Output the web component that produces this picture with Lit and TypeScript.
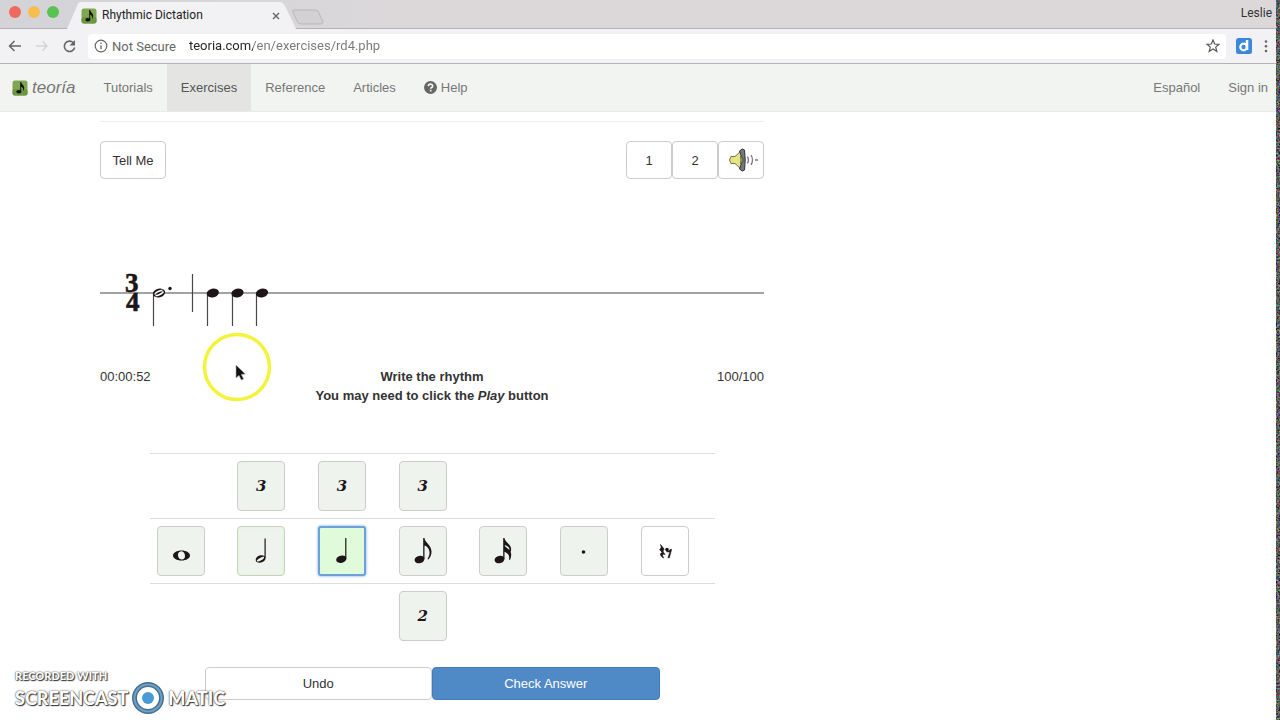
import { LitElement, html, svg, css } from "lit";
import { customElement, state } from "lit/decorators.js";

const glyphs: Record<string, unknown> = {
  whole: svg`<path fill-rule="evenodd" d="M24.500 24.500c4.900 0 8.500 2.200 8.500 5S29.400 34.500 24.500 34.500s-8.500-2.200-8.500-5 3.600-5 8.500-5zm-.9.900c-2.100.3-3 2-2.600 4.400.4 2.400 2 4 4.300 3.700 2.200-.3 3-2.100 2.600-4.500-.4-2.400-2.100-3.900-4.300-3.600z"/>`,
  half: svg`<path fill-rule="evenodd" d="M27.500 12.500h1.200v19c0 3-2.800 5.200-6 5.200-2.500 0-4-1-4-2.800 0-2.500 2.900-4.600 5.900-4.600 1.200 0 2.200.3 2.900.9zM27 30.800c-.7-.9-6.600 2.100-7.100 3.800-.2 1.500 1.800 1.100 3.900 0 2-1 3.800-2.600 3.200-3.800z"/>`,
  quarter: svg`<ellipse cx="23.300" cy="33.200" rx="5.200" ry="3.600" transform="rotate(-14 23.300 33.200)"/><path d="M27.200 12h1.200v20.500h-1.200z"/>`,
  eighth: svg`<ellipse cx="20.500" cy="33.500" rx="5" ry="3.700" transform="rotate(-14 20.500 33.500)"/>
    <path d="M24.200 12h1.300c.3 4.600 6.800 7 7 13.500.1 3.100-1 5.700-3.200 8l-.8-.6c1.700-2.500 2.200-4.700 2-6.800-.3-3.600-2.500-5.800-5-6.500V33h-1.300z"/>`,
  sixteenth: svg`<ellipse cx="20.500" cy="33.500" rx="5" ry="3.700" transform="rotate(-14 20.500 33.500)"/>
    <path fill-rule="evenodd" d="M24.200 12h1.300c.3 3.900 6 6 6.600 10.500.1 1.400 0 2.400-.5 3.400 1 2 .8 5-.6 8l-1-.3c.7-3.700-.3-6.200-4.500-7.900V33h-1.300zM25.600 19c.3 2.300 2.900 3 4.900 5 .2-2.500-1.900-4.200-4.900-5z"/>`,
  dot: svg`<circle cx="23.500" cy="26" r="1.800"/>`,
  rest: svg`<path stroke="#1d1518" stroke-width=".7" d="M19.500 18.500l3.600 4.600c-1.500 1.700-1.300 2.800.9 5.300-2-.6-2.900-.1-2.300 1.400.2.700.5 1.600.9 2.200-2.400-1.300-4.100-3.500-2.500-4.900.4-.4.900-.5 1.500-.4l-3-3c1.800-1.600 1.900-2.800.9-5.200z"/>
    <circle cx="26" cy="23.500" r="1.800"/><path stroke="#1d1518" stroke-width=".5" d="M25 24.800c2.200.8 3.300 0 4.700-1.700l1 .3-2.400 8.600-1.400-.3 2-6c-1.500.7-2.500.5-3.900-.9z"/>`,
};

type Cell = { label: string; glyph?: string; text?: string; tone?: string } | null;

const rows: Cell[][] = [
  [null, { label: "Half note triplet", text: "3" }, { label: "Quarter note triplet", text: "3" }, { label: "Eighth note triplet", text: "3" }],
  [
    { label: "Whole note", glyph: "whole" },
    { label: "Half note", glyph: "half", tone: "tinted" },
    { label: "Quarter note", glyph: "quarter" },
    { label: "Eighth note", glyph: "eighth" },
    { label: "Sixteenth note", glyph: "sixteenth" },
    { label: "Dot", glyph: "dot" },
    { label: "Rests", glyph: "rest", tone: "plain" },
  ],
  [null, null, null, { label: "Duplet", text: "2" }],
];

const favicon = html`<svg class="favicon" viewBox="0 0 16 16" aria-hidden="true">
  <rect x=".5" y=".5" width="15" height="15" rx="2.500" fill="#7fa650"/>
  <rect x=".5" y="9" width="15" height="6.500" rx="2.500" fill="#6d9640"/>
  <ellipse cx="6.800" cy="11.800" rx="2.500" ry="1.800" fill="#111"/>
  <path d="M8.200 2h1c.3 2.200 3 3.200 3 6 0 1.200-.4 2.100-1 3 .2-2.400-.5-3.700-2-4.300v5.100h-1z" fill="#111"/></svg>`;

@customElement("browser-bar")
export class BrowserBar extends LitElement {
  static styles = css`
    :host { display: block; font-family: Roboto, "Liberation Sans", sans-serif; }
    button { border: 0; padding: 0; background: none; display: grid; place-items: center; }
    svg { display: block; }
    .tabs { height: 28px; display: flex; background: linear-gradient(90deg, #d3d3d8, #dcd8da 35%, #dcd8da); border-bottom: 1px solid #b5b2b5; }
    .lights { display: flex; gap: 7px; padding: 6px 0 0 9px; width: 57px; }
    .light { width: 12px; height: 12px; border-radius: 50%; }
    .red { background: #ee6a5f; }
    .amber { background: #f5be4f; }
    .green { background: #58c353; }
    .tab { position: relative; width: 231px; height: 29px; display: flex; align-items: center; color: #222; font-size: 12px; padding: 2px 0 0 15px; box-sizing: border-box; }
    .shape { position: absolute; inset: 0; width: 100%; height: 100%; }
    .tab > :not(.shape) { position: relative; }
    .favicon { width: 16px; height: 16px; margin-right: 5px; }
    .title { flex: 1; }
    .close { margin-right: 16px; width: 10px; height: 10px; }
    .add { margin: 8px 0 0 -7px; height: 18px; }
    .user { margin-left: auto; padding: 6px 4px 0 0; font-size: 12px; line-height: 14px; color: #333; }
    .toolbar { height: 34px; display: flex; align-items: center; gap: 10px; background: #f2f1f3; border-bottom: 1px solid #b4b4b6; padding: 0 4px 0 7px; }
    .nav { width: 17px; height: 17px; }
    .address { flex: 1; height: 25px; display: flex; align-items: center; gap: 4px; padding: 0 6px; background: #fff; border-radius: 4px; font-size: 13px; color: #666; }
    .secure { margin-right: 9px; }
    .url { flex: 1; min-width: 0; padding: 0; border: 0; outline: 0; font: inherit; line-height: 20px; color: transparent; background: linear-gradient(90deg, #222 64px, #777 64px); -webkit-background-clip: text; background-clip: text; }
    .menu { width: 10px; height: 17px; }
  `;

  render() {
    return html`
      <div class="tabs">
        <div class="lights"><span class="light red"></span><span class="light amber"></span><span class="light green"></span></div>
        <div class="tab">
          <svg class="shape" viewBox="0 0 231 29" preserveAspectRatio="none" aria-hidden="true"><path d="M1 29L11 6Q12 2 15 2H214Q217 2 219 6L230 29Z" fill="#f2f1f3"/></svg>
          ${favicon}<span class="title">Rhythmic Dictation</span>
          <button class="close" aria-label="Close tab"><svg width="10" height="10"><path d="M2 2l6 6M8 2l-6 6" stroke="#666" stroke-width="1.400"/></svg></button>
        </div>
        <button class="add" aria-label="New tab"><svg width="34" height="18"><path d="M3 2h22q3 0 4 3l4 9q0 2-2 2H11q-3 0-4-3L3 4z" fill="#d3d1d3" stroke="#b9b7b9"/></svg></button>
        <span class="user">Leslie</span>
      </div>
      <div class="toolbar">
        <button class="nav" aria-label="Back"><svg width="17" height="17"><path d="M14 8H3M7.500 3L2.500 8 7.500 13" fill="none" stroke="#666" stroke-width="1.500"/></svg></button>
        <button class="nav" aria-label="Forward"><svg width="17" height="17"><path d="M2 8h11M8.500 3.500L13 8 8.500 12.500" fill="none" stroke="#d4d4d6" stroke-width="1.500"/></svg></button>
        <button class="nav" aria-label="Reload"><svg width="17" height="17"><path d="M12.300 4.700A5.200 5.200 0 1 0 13.600 9.500" fill="none" stroke="#666" stroke-width="1.600"/><path d="M14 2v5.500H8.500z" fill="#666"/></svg></button>
        <div class="address">
          <svg width="14" height="14" aria-hidden="true"><circle cx="7" cy="7" r="5.800" fill="none" stroke="#666" stroke-width="1.200"/><path d="M7 6.200v4M7 3.600v1.400" stroke="#666" stroke-width="1.300"/></svg>
          <span class="secure">Not Secure</span>
          <input class="url" type="text" aria-label="Address" .value=${"teoria.com/en/exercises/rd4.php"}>
          <button aria-label="Bookmark"><svg width="14" height="14"><path d="M7 1l1.700 4 4.300.3-3.300 2.800 1.100 4.300L7 10l-3.800 2.400 1.100-4.300L1 5.300 5.300 5z" fill="none" stroke="#555" stroke-width="1.200"/></svg></button>
        </div>
        <svg width="16" height="16" aria-hidden="true"><rect width="16" height="16" rx="2.500" fill="#3b87dc"/><circle cx="7.600" cy="9" r="3.300" fill="none" stroke="#fff" stroke-width="2.200"/><path d="M9.800 2h2.500v10H9.800z" fill="#fff"/></svg>
        <button class="menu" aria-label="Menu"><svg width="10" height="17"><g fill="#666"><circle cx="4" cy="3.500" r="1.300"/><circle cx="4" cy="8.300" r="1.300"/><circle cx="4" cy="13" r="1.300"/></g></svg></button>
      </div>`;
  }
}

@customElement("site-nav")
export class SiteNav extends LitElement {
  static styles = css`
    :host { display: block; }
    nav { display: flex; height: 47px; background: #f2f4f1; border-bottom: 1px solid #e9ebe8; }
    a { display: flex; align-items: center; gap: 4px; padding: 0 14px; color: #777; text-decoration: none; font-size: 13px; }
    .brand { padding-left: 12px; font-size: 17px; font-style: italic; }
    .active { background: #e4e5e3; color: #555; }
    .push { margin-left: auto; }
    .end { padding-right: 8px; }
    .favicon { width: 16px; height: 16px; }
  `;

  render() {
    return html`<nav>
      <a class="brand" href="#">${favicon}teoría</a>
      <a href="#">Tutorials</a>
      <a class="active" href="#">Exercises</a>
      <a href="#">Reference</a>
      <a href="#">Articles</a>
      <a href="#"><svg width="13" height="13" aria-hidden="true"><circle cx="6.500" cy="6.500" r="6.500" fill="#666"/><path d="M4.300 5.100q.2-2 2.200-2t2.200 1.800q0 1.100-1.100 1.600-.9.500-.9 1.300M6.700 8.800v1.600" fill="none" stroke="#f2f4f1" stroke-width="1.600"/></svg>Help</a>
      <a class="push" href="#">Español</a>
      <a class="end" href="#">Sign in</a>
    </nav>`;
  }
}

@customElement("rhythm-palette")
export class RhythmPalette extends LitElement {
  @state() private selected = "Quarter note";

  static styles = css`
    :host { display: block; }
    .row { display: grid; grid-template-columns: repeat(7, 1fr); height: 64px; align-items: center; border-top: 1px solid #ddd; }
    .cell { padding-left: 7px; }
    button { display: grid; place-items: center; width: 48px; height: 50px; padding: 0; border: 1px solid #ccc; border-radius: 4px; background: #eff3ee; color: #1d1518; font: italic bold 15px/20px "DejaVu Serif", serif; }
    .tinted { background: linear-gradient(#eff3ee, #eff3ee) center / 42px 44px no-repeat #e5f8df; }
    .plain { background: #fff; }
    .selected { background: #e0fbd9; border: 2px solid #6f9fd8; border-radius: 3px; box-shadow: 0 0 3px #6fa5e8; }
    svg { display: block; fill: #1d1518; }
  `;

  render() {
    return rows.map(
      (row) => html`<div class="row">
        ${row.map(
          (c) => html`<div class="cell">
            ${c
              ? html`<button
                  class=${c.label === this.selected ? "selected" : c.tone ?? ""}
                  aria-label=${c.label}
                  @click=${() => (this.selected = c.label)}
                >${c.glyph ? html`<svg width="44" height="46" viewBox="2 2 44 46">${glyphs[c.glyph]}</svg>` : c.text}</button>`
              : ""}
          </div>`
        )}
      </div>`
    );
  }
}

@customElement("app-root")
export class AppRoot extends LitElement {
  static styles = css`
    :host { display: flex; position: relative; min-height: 100vh; overflow: hidden; background: #fff; color: #333; font: 13px/19px "Liberation Sans", Arial, sans-serif; }
    .page { flex: 1; min-width: 0; }
    .edge { flex: none; width: 4px; align-self: stretch; }
    .noise { display: block; width: 4px; height: 100%; }
    main { width: calc(100% - 200px); max-width: 664px; margin: 9px 0 0 100px; }
    hr { margin: 0 0 19px; border: 0; border-top: 1px solid #eee; }
    button { font: inherit; color: #333; background: #fff; border: 1px solid #ccc; border-radius: 4px; padding: 0; }
    .controls { display: flex; }
    .controls button { height: 38px; width: 46px; display: grid; place-items: center; }
    .controls .tell { width: 66px; margin-right: auto; }
    .staff { display: block; width: 100%; height: 188px; color: #1d1518; }
    .time { font: bold 27px "Liberation Serif", serif; stroke: currentColor; stroke-width: 0.6px; }
    .status { display: grid; grid-template-columns: 1fr auto 1fr; }
    .prompt { margin: 0; text-align: center; font-weight: bold; }
    .score { text-align: right; }
    rhythm-palette { max-width: 565px; margin: 48px auto 0; }
    .actions { display: grid; grid-template-columns: 1fr 1fr; max-width: 455px; margin: 19px auto 0; }
    .actions button { height: 33px; }
    .actions .check { background: #4f89c6; border-color: #447cb9; color: #fff; }
    .pointer { position: absolute; left: 202px; top: 332px; pointer-events: none; }
    .watermark { position: absolute; left: 15px; top: 669px; pointer-events: none; color: #fff; font: 900 18px/20px Lato, sans-serif; text-shadow: 1px 1px 1px #333, 0 0 2px #555, 0 0 1px #777; }
    .small { display: block; font-size: 11px; line-height: 14px; }
    .logo { display: flex; align-items: center; gap: 3px; margin-top: -2px; }
  `;

  render() {
    return html`
      <div class="page">
        <browser-bar></browser-bar>
        <site-nav></site-nav>
        <main>
          <hr>
          <div class="controls">
            <button class="tell">Tell Me</button>
            <button>1</button>
            <button>2</button>
            <button aria-label="Play">
              <svg width="34" height="26" aria-hidden="true">
                <path d="M7 9.500h4l7-6.500v20l-7-6.500H7q-3-3.500 0-7z" fill="#e6e586" stroke="#77774a"/>
                <path d="M15.500 4q3-3.500 5-1 1.500 10 0 20-2 2.500-5-1 4-9 0-18z" fill="#777780" stroke="#333"/>
                <path d="M17 9q4 4 0 8z" fill="#dedb80" stroke="#444"/>
                <path d="M23.500 9.500q2 3.500 0 7M27 8q3 5 0 10M31 13h3" fill="none" stroke="#777797" stroke-width="1.300"/>
              </svg>
            </button>
          </div>
          <svg class="staff" role="img" aria-label="Rhythm in three four time">
            <g stroke="#4a4547" stroke-width="1.200">
              <line x1="0" y1="114" x2="100%" y2="114"/>
              <path d="M53.500 115v32M92.500 95v38M107.500 115v32M132.500 115v32M156.500 115v32"/>
            </g>
            <g fill="currentColor">
              <text class="time" x="25" y="113">3</text>
              <text class="time" x="26" y="132">4</text>
              <ellipse cx="112.800" cy="114" rx="6.200" ry="4.400" transform="rotate(-14 112.800 114)"/>
              <ellipse cx="137.500" cy="114" rx="6.200" ry="4.400" transform="rotate(-14 137.500 114)"/>
              <ellipse cx="162" cy="114" rx="6.200" ry="4.400" transform="rotate(-14 162 114)"/>
              <circle cx="70" cy="109.500" r="1.700"/>
            </g>
            <ellipse cx="59" cy="114" rx="6.200" ry="4.300" transform="rotate(-14 59 114)" fill="currentColor"/>
            <path d="M54.800 115.600Q56 112.500 62.500 111.300M55.500 116.800Q61 116 63.500 112.500" fill="none" stroke="#fff" stroke-width="1.500"/>
          </svg>
          <div class="status">
            <span>00:00:52</span>
            <p class="prompt">Write the rhythm<br>You may need to click the <em>Play</em> button</p>
            <span class="score">100/100</span>
          </div>
          <rhythm-palette></rhythm-palette>
          <div class="actions">
            <button>Undo</button>
            <button class="check">Check Answer</button>
          </div>
        </main>
      </div>
      <div class="edge">
        <svg class="noise" aria-hidden="true">
          <filter id="n" x="0" y="0" width="100%" height="100%" color-interpolation-filters="sRGB">
            <feTurbulence type="fractalNoise" baseFrequency="0.6" numOctaves="2" seed="4"/>
            <feColorMatrix values="1.300 0 0 0 -0.300  0 1.300 0 0 -0.300  0 0 1.300 0 -0.300  0 0 0 0 1"/>
          </filter>
          <rect width="100%" height="100%" filter="url(#n)"/>
        </svg>
      </div>
      <svg class="pointer" width="70" height="70" aria-hidden="true">
        <circle cx="35" cy="35" r="32.500" fill="none" stroke="#f3f33c" stroke-width="3.500"/>
        <path d="M34 33v13l3-2.600 2.300 4.600 2.300-1.100-2.300-4.500 4-.4z" fill="#111" stroke="#aaa" stroke-width=".6"/>
      </svg>
      <div class="watermark">
        <span class="small">RECORDED WITH</span>
        <span class="logo">SCREENCAST
          <svg width="34" height="34" aria-hidden="true">
            <circle cx="17" cy="17" r="13.500" fill="#fff" stroke="#45708f" stroke-width="5"/>
            <circle cx="17" cy="17" r="13.500" fill="none" stroke="#6fa0c4" stroke-width="2"/>
            <circle cx="17" cy="17" r="6" fill="#4a9ad4"/>
          </svg>
          MATIC</span>
      </div>`;
  }
}
